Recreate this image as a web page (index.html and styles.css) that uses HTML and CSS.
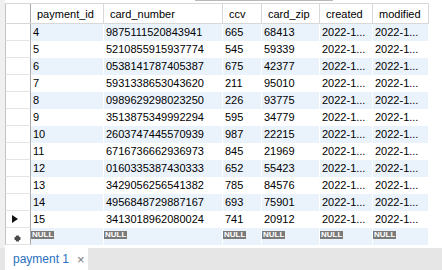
FILE: index.html
```html
<!DOCTYPE html>
<html>
<head>
<meta charset="utf-8">
<link rel="stylesheet" href="styles.css">
</head>
<body>
<div class="app">
  <div class="topstrip"><div class="scrollfrag"></div></div>
  <div class="main">
    <div class="gutter"></div>
    <div class="grid">
      <div class="row head">
        <div class="ind"></div>
        <div class="hc">payment_id</div>
        <div class="hc">card_number</div>
        <div class="hc">ccv</div>
        <div class="hc">card_zip</div>
        <div class="hc">created</div>
        <div class="hc">modified</div>
      </div>
      <div class="row alt"><div class="ind"></div><div class="c">4</div><div class="c">9875111520843941</div><div class="c">665</div><div class="c">68413</div><div class="c">2022-1...</div><div class="c">2022-1...</div></div>
      <div class="row"><div class="ind"></div><div class="c">5</div><div class="c">5210855915937774</div><div class="c">545</div><div class="c">59339</div><div class="c">2022-1...</div><div class="c">2022-1...</div></div>
      <div class="row alt"><div class="ind"></div><div class="c">6</div><div class="c">0538141787405387</div><div class="c">675</div><div class="c">42377</div><div class="c">2022-1...</div><div class="c">2022-1...</div></div>
      <div class="row"><div class="ind"></div><div class="c">7</div><div class="c">5931338653043620</div><div class="c">211</div><div class="c">95010</div><div class="c">2022-1...</div><div class="c">2022-1...</div></div>
      <div class="row alt"><div class="ind"></div><div class="c">8</div><div class="c">0989629298023250</div><div class="c">226</div><div class="c">93775</div><div class="c">2022-1...</div><div class="c">2022-1...</div></div>
      <div class="row"><div class="ind"></div><div class="c">9</div><div class="c">3513875349992294</div><div class="c">595</div><div class="c">34779</div><div class="c">2022-1...</div><div class="c">2022-1...</div></div>
      <div class="row alt"><div class="ind"></div><div class="c">10</div><div class="c">2603747445570939</div><div class="c">987</div><div class="c">22215</div><div class="c">2022-1...</div><div class="c">2022-1...</div></div>
      <div class="row"><div class="ind"></div><div class="c">11</div><div class="c">6716736662936973</div><div class="c">845</div><div class="c">21969</div><div class="c">2022-1...</div><div class="c">2022-1...</div></div>
      <div class="row alt"><div class="ind"></div><div class="c">12</div><div class="c">0160335387430333</div><div class="c">652</div><div class="c">55423</div><div class="c">2022-1...</div><div class="c">2022-1...</div></div>
      <div class="row"><div class="ind"></div><div class="c">13</div><div class="c">3429056256541382</div><div class="c">785</div><div class="c">84576</div><div class="c">2022-1...</div><div class="c">2022-1...</div></div>
      <div class="row alt"><div class="ind"></div><div class="c">14</div><div class="c">4956848729887167</div><div class="c">693</div><div class="c">75901</div><div class="c">2022-1...</div><div class="c">2022-1...</div></div>
      <div class="row"><div class="ind"><svg class="arrow" width="6" height="8" viewBox="0 0 6 8"><polygon points="0,0 6,4 0,8" fill="#111"/></svg></div><div class="c">15</div><div class="c">3413018962080024</div><div class="c">741</div><div class="c">20912</div><div class="c">2022-1...</div><div class="c">2022-1...</div></div>
      <div class="row alt nullrow"><div class="ind"><svg class="star" width="7" height="7" viewBox="0 0 7 7"><path d="M2.3 0.5h2.4l0.5 1.3 1.3 0.5v2.4l-1.3 0.5-0.5 1.3h-2.4l-0.5-1.3-1.3-0.5v-2.4l1.3-0.5z" fill="#4a4a4a"/></svg></div><div class="c"><span class="null">NULL</span></div><div class="c"><span class="null">NULL</span></div><div class="c"><span class="null">NULL</span></div><div class="c"><span class="null">NULL</span></div><div class="c"><span class="null">NULL</span></div><div class="c"><span class="null">NULL</span></div></div>
    </div>
  </div>
  <div class="spacer"><div class="gutter"></div></div>
  <div class="tabbar">
    <div class="tab"><span class="tabname">payment 1</span><span class="close">×</span></div>
  </div>
</div>
</body>
</html>
```
FILE: styles.css
```css
html, body {
  margin: 0;
  padding: 0;
  background: #ffffff;
}
.app {
  width: 442px;
  height: 270px;
  overflow: hidden;
  font-family: "Liberation Sans", Arial, sans-serif;
  font-size: 11px;
  color: #000;
  display: flex;
  flex-direction: column;
}
.topstrip {
  height: 3px;
  display: flex;
  background: linear-gradient(to right, #f0f0f0 0 5px, #ffffff 5px);
}
.scrollfrag {
  margin-left: 195px;
  width: 138px;
  height: 1px;
  background: #b8b8b8;
}
.main {
  display: flex;
}
.gutter {
  width: 5px;
  background: #f0f0f0;
  flex: none;
}
.grid {
  display: flex;
  flex-direction: column;
}
.row {
  display: grid;
  grid-template-columns: 26px 73px 119px 39px 58px 53px 56px;
  height: 17px;
}
.row.head {
  height: 21px;
  box-sizing: border-box;
  border-top: 1px solid #d8d8d8;
  border-bottom: 1px solid #d8d8d8;
}
.ind {
  box-sizing: border-box;
  border-left: 1px solid #c4c4c4;
  border-right: 1px solid #a8a8a8;
  border-bottom: 1px solid #e4e4e4;
  background: #fff;
  display: flex;
  align-items: center;
}
.head .ind {
  border-bottom: none;
}
.hc {
  box-sizing: border-box;
  border-right: 1px solid #d8d8d8;
  padding: 3px 0 0 6px;
  line-height: 14px;
  white-space: nowrap;
  overflow: hidden;
}
.c {
  box-sizing: border-box;
  border-right: 1px solid #fff;
  padding-left: 2px;
  line-height: 17px;
  white-space: nowrap;
  overflow: hidden;
}
.row.alt .c {
  background: #eaf2fc;
}
.arrow {
  margin-left: 6px;
}
.star {
  margin-left: 8px;
  margin-top: 4px;
}
.nullrow .c {
  padding-left: 0;
  line-height: 8px;
  padding-top: 3px;
}
.null {
  display: inline-block;
  background: #7a7a7a;
  color: #fff;
  font-family: "Liberation Sans", Arial, sans-serif;
  font-weight: bold;
  font-size: 8px;
  line-height: 8px;
  height: 8px;
  padding: 0 1px;
  vertical-align: top;
}
.spacer {
  height: 3px;
  display: flex;
}
.tabbar {
  height: 22px;
  background: #e6e6e6;
  display: flex;
}
.tab {
  margin-left: 5px;
  width: 83px;
  background: #fff;
  display: flex;
  align-items: center;
  padding-left: 8px;
  box-sizing: border-box;
}
.tabname {
  color: #2a6fc0;
  font-family: "Liberation Sans", Arial, sans-serif;
  font-size: 12px;
}
.close {
  color: #777;
  font-size: 13px;
  margin-left: 8px;
}
```
